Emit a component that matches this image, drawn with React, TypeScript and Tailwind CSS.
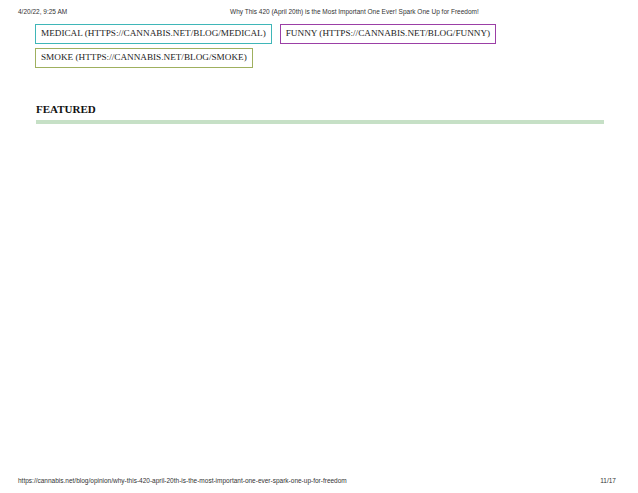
const rows = [
  [
    { label: 'MEDICAL (HTTPS://CANNABIS.NET/BLOG/MEDICAL)', border: 'border-[#3fb6b8]' },
    { label: 'FUNNY (HTTPS://CANNABIS.NET/BLOG/FUNNY)', border: 'border-[#9b3fa6]' },
  ],
  [{ label: 'SMOKE (HTTPS://CANNABIS.NET/BLOG/SMOKE)', border: 'border-[#9fb05e]' }],
];

export default function App() {
  return (
    <div className="w-[638px] h-[493px] bg-white flex flex-col font-['Liberation_Sans',Arial,sans-serif] text-[#333]">
      {/* print header */}
      <div className="flex items-center h-[24px] pl-[18px] pr-[18px] text-[6.5px] text-[#333]">
        <span className="w-[212px]">4/20/22, 9:25 AM</span>
        <span>Why This 420 (April 20th) is the Most Important One Ever! Spark One Up for Freedom!</span>
      </div>

      {/* tags */}
      <div className="flex flex-col gap-[4px] pl-[35px] font-['Liberation_Serif',serif] text-[9.2px] text-[#222]">
        {rows.map((row, i) => (
          <div key={i} className="flex gap-[8px]">
            {row.map((t) => (
              <span key={t.label} className={`border ${t.border} px-[5px] h-[20px] flex items-center whitespace-nowrap`}>
                {t.label}
              </span>
            ))}
          </div>
        ))}
      </div>

      {/* featured */}
      <div className="pl-[36px] pr-[34px] mt-[34px]">
        <h2 className="font-['Liberation_Serif',serif] font-bold text-[11px] text-[#111] leading-[14px]">FEATURED</h2>
        <div className="mt-[4px] h-[4px] bg-[#c6e0c6]" />
      </div>

      <div className="flex-1" />

      {/* print footer */}
      <div className="flex items-center justify-between h-[22px] pl-[18px] pr-[22px] text-[6.5px] text-[#333] mb-[1px]">
        <span>https://cannabis.net/blog/opinion/why-this-420-april-20th-is-the-most-important-one-ever-spark-one-up-for-freedom</span>
        <span>11/17</span>
      </div>
    </div>
  );
}
